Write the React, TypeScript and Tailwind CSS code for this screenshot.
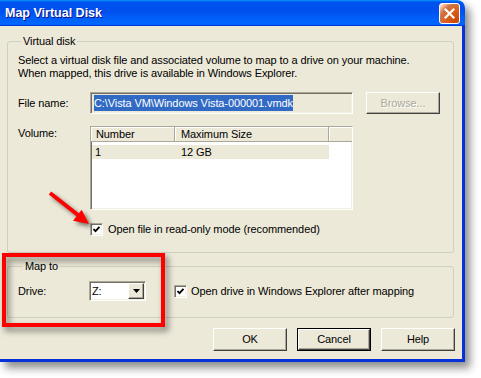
const sunken =
  "border border-t-[#aca899] border-l-[#aca899] border-b-white border-r-white shadow-[inset_1px_1px_0_#716f64,inset_-1px_-1px_0_#f1efe2]";
const raised =
  "border border-t-white border-l-white border-b-[#404040] border-r-[#404040] shadow-[inset_-1px_-1px_0_#aca899] bg-[#ece9d8]";

const CheckBox = () => (
  <div className={`w-[13px] h-[13px] bg-white flex items-center justify-center ${sunken}`}>
    <svg width="9" height="9" viewBox="0 0 9 9">
      <polyline points="1.5,4 3.5,6.2 7.5,1.8" fill="none" stroke="#000" strokeWidth="1.8" />
    </svg>
  </div>
);

const Button = ({ label, isDefault }: { label: string; isDefault?: boolean }) => {
  if (isDefault) {
    return (
      <div className="w-[74px] h-[23px] border border-black flex">
        <div className={`flex-1 flex items-center justify-center ${raised}`}>{label}</div>
      </div>
    );
  }
  return <div className={`w-[74px] h-[23px] flex items-center justify-center ${raised}`}>{label}</div>;
};

const TitleBar = () => (
  <div className="h-[26px] flex items-center justify-between rounded-tr-[8px] bg-[linear-gradient(180deg,#0997ff,#0053ee_8%,#0050ee_40%,#0066ff_88%,#0066ff_93%,#005bff_95%,#003dd7_96%,#003dd7)]">
    <span className="pl-[5px] text-white font-bold text-[12.5px] tracking-normal [text-shadow:1px_1px_#0f1089]">
      Map Virtual Disk
    </span>
    <div className="mr-[5px] w-[21px] h-[21px] rounded-[3px] border border-white flex items-center justify-center bg-[radial-gradient(circle_at_90%_90%,#cc4600_0,#dc6527_55%,#cd7546_70%,#ffccb2_90%,#fff_100%)]">
      <svg width="11" height="11" viewBox="0 0 11 11">
        <path d="M1.5 1.5 L9.5 9.5 M9.5 1.5 L1.5 9.5" stroke="#fff" strokeWidth="2.2" strokeLinecap="square" />
      </svg>
    </div>
  </div>
);

const App = () => {
  return (
    <div className="relative w-[481px] h-[378px] bg-white overflow-hidden font-['Liberation_Sans',Arial,sans-serif] text-[11px] leading-[13px] tracking-[-0.1px] text-black">
      <div className="w-[465px] flex flex-col shadow-[5px_6px_9px_rgba(0,0,0,0.45)] rounded-tr-[8px]">
        <TitleBar />
        <div className="h-[336px] bg-[#ece9d8] border-r-[3px] border-b-[3px] border-[#0831d9] flex flex-col pt-[9px]">
          {/* Virtual disk */}
          <fieldset className="ml-[7px] mr-[8px] border border-[#d0d0bf] rounded-[3px] pl-[10px] pt-[6px] pb-[16px]">
            <legend className="ml-[3px] px-[2px]">Virtual disk</legend>
            <p>
              Select a virtual disk file and associated volume to map to a drive on your machine.
              <br />
              When mapped, this drive is available in Windows Explorer.
            </p>

            <div className="flex items-center mt-[12px]">
              <span className="w-[72px]">File name:</span>
              <div className={`w-[263px] h-[22px] flex items-center pl-[3px] ${sunken}`}>
                <span className="bg-[#316ac5] text-white leading-[16px]">C:\Vista VM\Windows Vista-000001.vmdk</span>
              </div>
              <div
                className={`ml-[13px] w-[74px] h-[22px] flex items-center justify-center text-[#aca899] [text-shadow:1px_1px_#fff] ${raised}`}
              >
                Browse...
              </div>
            </div>

            <div className="flex mt-[12px]">
              <span className="w-[72px] pt-[1px]">Volume:</span>
              <div className={`w-[263px] h-[84px] bg-white flex flex-col ${sunken}`}>
                <div className="flex h-[15px] bg-[#ece9d8] border-b border-[#aca899]">
                  <div className="w-[84px] pl-[5px] flex items-center border-r border-[#aca899] shadow-[inset_1px_1px_0_#fff]">
                    Number
                  </div>
                  <div className="w-[154px] pl-[6px] flex items-center border-r border-[#aca899] shadow-[inset_1px_1px_0_#fff]">
                    Maximum Size
                  </div>
                  <div className="flex-1 shadow-[inset_1px_1px_0_#fff]" />
                </div>
                <div className="mt-[3px] ml-[1px] w-[237px] h-[14px] flex items-center bg-[#ece9d8]">
                  <span className="w-[83px] pl-[3px]">1</span>
                  <span className="pl-[6px]">12 GB</span>
                </div>
              </div>
            </div>

            <div className="flex items-center mt-[13px] ml-[72px] gap-[5px]">
              <CheckBox />
              <span>Open file in read-only mode (recommended)</span>
            </div>
          </fieldset>

          {/* Map to */}
          <fieldset className="mt-[7px] ml-[7px] mr-[8px] border border-[#d0d0bf] rounded-[3px] pl-[10px] pt-[8px] pb-[16px]">
            <legend className="ml-[5px] px-[2px]">Map to</legend>
            <div className="flex items-center">
              <span className="w-[71px]">Drive:</span>
              <div className={`w-[57px] h-[20px] bg-white flex items-center justify-between pl-[2px] pr-[1px] ${sunken}`}>
                <span>Z:</span>
                <div className={`w-[16px] h-[16px] flex items-center justify-center ${raised}`}>
                  <svg width="7" height="4" viewBox="0 0 7 4">
                    <path d="M0 0 H7 L3.5 4 Z" fill="#000" />
                  </svg>
                </div>
              </div>
              <div className="ml-[28px] flex items-center gap-[4px]">
                <CheckBox />
                <span>Open drive in Windows Explorer after mapping</span>
              </div>
            </div>
          </fieldset>

          <div className="mt-[10px] pr-[7px] flex justify-end gap-[10px]">
            <Button label="OK" />
            <Button label="Cancel" isDefault />
            <Button label="Help" />
          </div>
        </div>
      </div>

      {/* annotations */}
      <div className="absolute left-[2px] top-[253px] w-[163px] h-[74px] border-[4px] border-[#ff0000] drop-shadow-[3px_4px_3px_rgba(0,0,0,0.5)]" />
      <svg
        className="absolute left-[40px] top-[185px] drop-shadow-[3px_3px_2px_rgba(0,0,0,0.5)]"
        width="60"
        height="50"
        viewBox="0 0 60 50"
      >
        <line x1="10" y1="8" x2="38" y2="30" stroke="#ff0000" strokeWidth="4" />
        <polygon points="49,39 33,35.7 41.7,24.7" fill="#ff0000" />
      </svg>
    </div>
  );
};

export default App;
